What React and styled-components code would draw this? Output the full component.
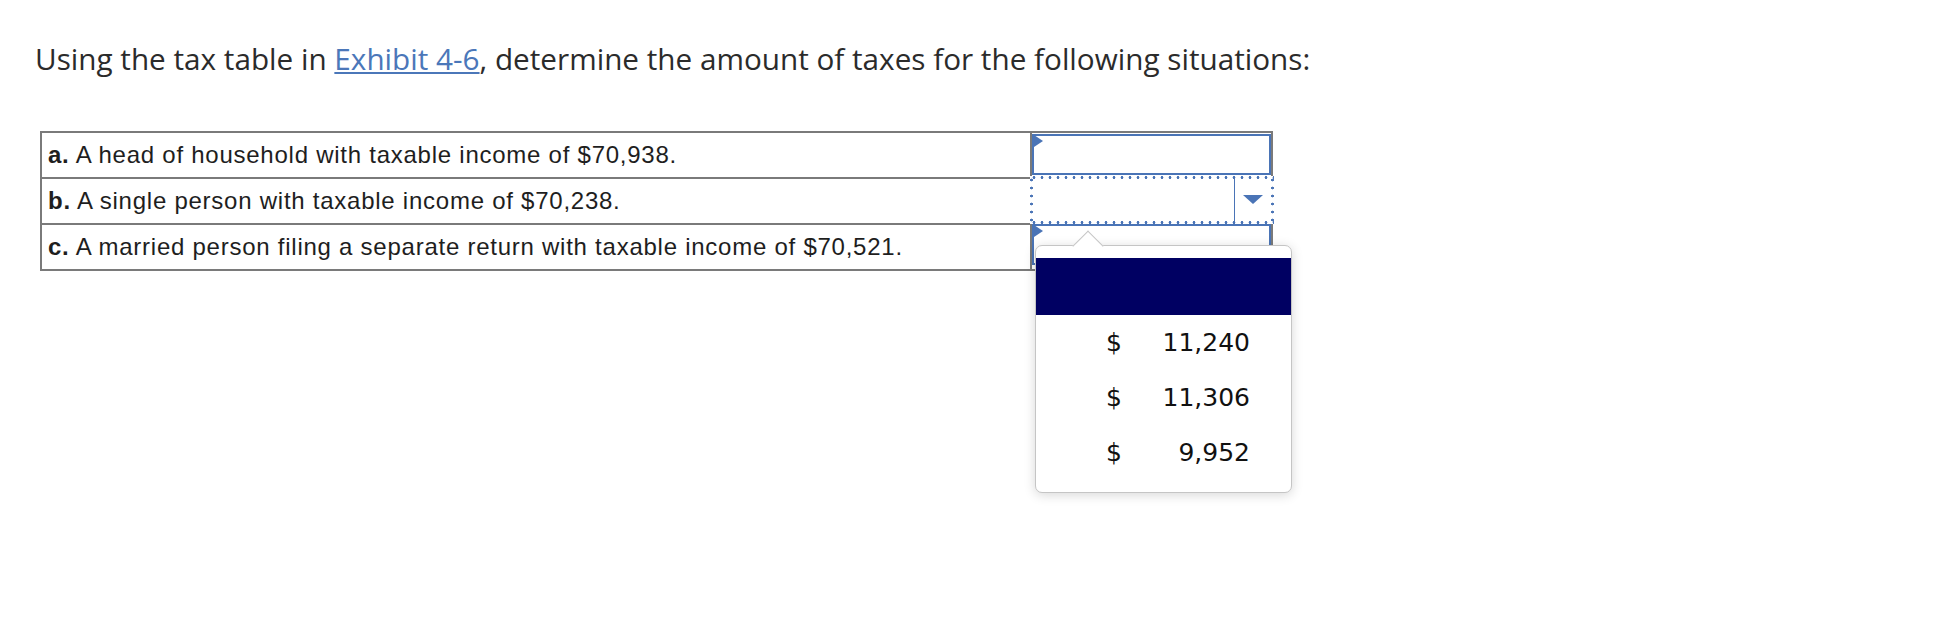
import React from "react"
import styled, { createGlobalStyle } from "styled-components"

const BLUE = "#4a74b6"
const GRID = "#7a7a7a"

const GlobalStyle = createGlobalStyle`
  body {
    margin: 0;
    background: #fff;
  }
`

const Page = styled.div`
  height: 622px;
  box-sizing: border-box;
  padding: 38px 0 0 35px;
`

const Prompt = styled.p`
  margin: 0;
  font-family: "Open Sans", sans-serif;
  font-size: 29.7px;
  line-height: 1.4;
  color: #2b2b2b;
`

const ExhibitLink = styled.a`
  color: #4b77b9;
  text-decoration: underline;
  text-decoration-thickness: 2px;
  text-underline-offset: 2px;
  cursor: pointer;
`

const Wrap = styled.div`
  position: relative;
  margin: 51px 0 0 5px;
  width: max-content;
`

const Grid = styled.div`
  display: grid;
  grid-template-columns: 990px 239px;
  border: 2px solid ${GRID};
`

const Situation = styled.div`
  height: 44px;
  line-height: 44px;
  padding-left: 6px;
  border-right: 2px solid ${GRID};
  border-bottom: ${(p) => (p.$last ? "none" : `2px solid ${GRID}`)};
  font-family: "Liberation Sans", Arial, sans-serif;
  font-size: 24px;
  letter-spacing: 0.75px;
  color: #1e1e1e;
  white-space: nowrap;

  b {
    font-weight: 700;
  }
`

const AnswerCell = styled.div`
  position: relative;
`

const TextField = styled.div`
  position: relative;
  height: 41px;
  box-sizing: border-box;
  margin-top: ${(p) => p.$offset}px;
  border: 2px solid ${BLUE};
  background: #fff;
`

const Flag = styled.span`
  position: absolute;
  top: -1px;
  left: 0;
  width: 0;
  height: 0;
  border-top: 6px solid transparent;
  border-bottom: 6px solid transparent;
  border-left: 9px solid ${BLUE};
`

const FocusRing = styled.div`
  position: absolute;
  top: -3px;
  bottom: 1px;
  left: -2px;
  right: -3px;
  display: flex;
  padding: 0 3px;
  background-color: #fff;
  background-image: radial-gradient(circle, ${BLUE} 1.1px, transparent 1.7px),
    radial-gradient(circle, ${BLUE} 1.1px, transparent 1.7px),
    radial-gradient(circle, ${BLUE} 1.1px, transparent 1.7px),
    radial-gradient(circle, ${BLUE} 1.1px, transparent 1.7px);
  background-size: 8px 3px, 8px 3px, 3px 8px, 3px 8px;
  background-position: 0 0, 0 100%, 0 0, 100% 0;
  background-repeat: repeat-x, repeat-x, repeat-y, repeat-y;
`

const SelectValue = styled.div`
  flex: 1;
`

const ArrowButton = styled.div`
  width: 36.5px;
  border-left: 1.5px solid ${BLUE};
  display: flex;
  align-items: center;
  justify-content: center;
`

const DownCaret = styled.span`
  width: 0;
  height: 0;
  border-left: 10px solid transparent;
  border-right: 10px solid transparent;
  border-top: 9px solid ${BLUE};
`

const Popup = styled.div`
  position: absolute;
  left: 995px;
  top: 114px;
  width: 257px;
  height: 248px;
  box-sizing: border-box;
  padding-top: 12px;
  border: 1px solid #c5c5c5;
  border-radius: 7px;
  background: #fff;
  box-shadow: 0 2px 12px rgba(0, 0, 0, 0.16);
`

const Nub = styled.span`
  position: absolute;
  top: -11px;
  left: 41px;
  width: 21px;
  height: 21px;
  background: #fff;
  border-top: 1px solid #c5c5c5;
  border-left: 1px solid #c5c5c5;
  transform: rotate(45deg);
`

const Band = styled.div`
  position: relative;
  height: 57px;
  background: #000062;
`

const ValueList = styled.div`
  padding: 0 41px 0 70px;
`

const ValueRow = styled.div`
  display: flex;
  justify-content: space-between;
  height: 55px;
  line-height: 55px;
  font-family: "DejaVu Sans", Verdana, sans-serif;
  font-size: 25px;
  color: #111;
`

const situations = [
  { key: "a", text: "A head of household with taxable income of $70,938." },
  { key: "b", text: "A single person with taxable income of $70,238." },
  {
    key: "c",
    text: "A married person filing a separate return with taxable income of $70,521.",
  },
]

const taxes = ["11,240", "11,306", "9,952"]

const App = () => {
  return (
    <>
      <GlobalStyle />
      <Page>
        <Prompt>
          Using the tax table in <ExhibitLink>Exhibit 4-6</ExhibitLink>, determine
          the amount of taxes for the following situations:
        </Prompt>
        <Wrap>
          <Grid>
            {situations.map((s, i) => (
              <React.Fragment key={s.key}>
                <Situation $last={i === situations.length - 1}>
                  <b>{s.key}.</b> {s.text}
                </Situation>
                <AnswerCell>
                  {s.key === "b" ? (
                    <FocusRing>
                      <SelectValue />
                      <ArrowButton>
                        <DownCaret />
                      </ArrowButton>
                    </FocusRing>
                  ) : (
                    <TextField $offset={i === 0 ? 1 : -1}>
                      <Flag />
                    </TextField>
                  )}
                </AnswerCell>
              </React.Fragment>
            ))}
          </Grid>
          <Popup>
            <Nub />
            <Band />
            <ValueList>
              {taxes.map((t) => (
                <ValueRow key={t}>
                  <span>$</span>
                  <span>{t}</span>
                </ValueRow>
              ))}
            </ValueList>
          </Popup>
        </Wrap>
      </Page>
    </>
  )
}

export default App
